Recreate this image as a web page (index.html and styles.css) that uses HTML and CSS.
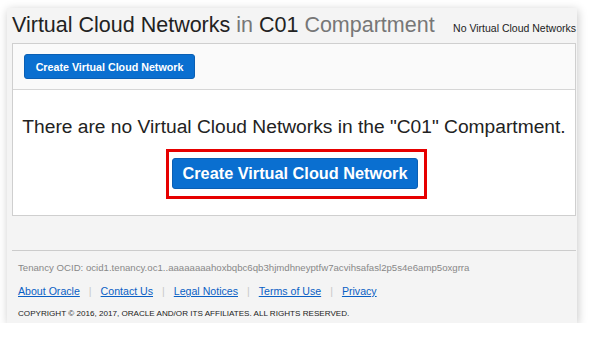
FILE: index.html
```html
<!DOCTYPE html>
<html>
<head>
<meta charset="utf-8">
<link rel="stylesheet" href="styles.css">
</head>
<body>
<div class="frame">
  <div class="header">
    <h1 class="title">Virtual Cloud Networks <span class="muted">in</span> C01 <span class="muted">Compartment</span></h1>
    <div class="count">No Virtual Cloud Networks</div>
  </div>
  <div class="card">
    <div class="toolbar">
      <button class="btn btn-small">Create Virtual Cloud Network</button>
    </div>
    <div class="empty">
      <p class="message">There are no Virtual Cloud Networks in the "C01" Compartment.</p>
      <div class="highlight">
        <button class="btn btn-large">Create Virtual Cloud Network</button>
      </div>
    </div>
  </div>
  <div class="footer">
    <div class="tenancy">Tenancy OCID: ocid1.tenancy.oc1..aaaaaaaahoxbqbc6qb3hjmdhneyptfw7acvihsafasl2p5s4e6amp5oxgrra</div>
    <div class="links">
      <a href="#">About Oracle</a><span class="sep">|</span><a href="#">Contact Us</a><span class="sep">|</span><a href="#">Legal Notices</a><span class="sep">|</span><a href="#">Terms of Use</a><span class="sep">|</span><a href="#">Privacy</a>
    </div>
    <div class="copyright">COPYRIGHT © 2016, 2017, ORACLE AND/OR ITS AFFILIATES. ALL RIGHTS RESERVED.</div>
  </div>
</div>
</body>
</html>
```

FILE: styles.css
```css
html, body {
  margin: 0;
  padding: 0;
  background: #ffffff;
}
body {
  font-family: "Liberation Sans", Arial, sans-serif;
  color: #222;
}
.frame {
  margin: 8px 0 0 7px;
  width: 570px;
  height: 315px;
  background: #f4f4f4;
  box-shadow: 1px 2px 9px rgba(0, 0, 0, 0.22);
  box-sizing: border-box;
  padding: 0 1px 0 5px;
  display: flex;
  flex-direction: column;
}
.header {
  display: flex;
  justify-content: space-between;
  align-items: baseline;
  padding: 3px 0 4px 0;
  height: 28px;
}
.title {
  margin: 0;
  font-weight: normal;
  font-size: 21.5px;
  line-height: 28px;
  color: #222;
  white-space: nowrap;
}
.muted {
  color: #777;
}
.count {
  font-size: 10.5px;
  color: #222;
  white-space: nowrap;
}
.card {
  border: 1px solid #cfcfcf;
  background: #fff;
  height: 173px;
  box-sizing: border-box;
}
.toolbar {
  background: #fafafa;
  padding: 10px 11px;
  border-bottom: 1px solid #d6d6d6;
  height: 46px;
  box-sizing: border-box;
}
.btn {
  font-family: "Liberation Sans", Arial, sans-serif;
  font-weight: bold;
  color: #fff;
  background: #0a6fd0;
  border: 1px solid #0a5fb4;
  border-radius: 3px;
  cursor: pointer;
}
.btn-small {
  font-size: 10.7px;
  height: 25px;
  width: 171px;
  padding: 0;
}
.empty {
  padding: 25px 0 0 0;
  text-align: center;
}
.message {
  margin: 0;
  font-size: 19.2px;
  line-height: 23px;
  color: #222;
}
.highlight {
  display: inline-block;
  margin: 11px 0 0 5px;
  border: 3px solid #e60000;
  padding: 6px 6px 7px 3px;
  line-height: 0;
}
.btn-large {
  font-size: 16.3px;
  height: 31px;
  width: 246px;
  padding: 0;
}
.footer {
  margin-top: 34px;
  border-top: 1px solid #cccccc;
  padding: 10px 0 0 6px;
}
.tenancy {
  font-size: 9.65px;
  line-height: 13px;
  color: #888;
  white-space: nowrap;
}
.links {
  margin-top: 10px;
  font-size: 10.6px;
  line-height: 14px;
}
.links a {
  color: #0a5fc4;
  text-decoration: underline;
}
.sep {
  color: #c8c8c8;
  margin: 0 9px;
}
.copyright {
  margin-top: 10px;
  font-size: 8.1px;
  line-height: 11px;
  color: #222;
  white-space: nowrap;
}
```
